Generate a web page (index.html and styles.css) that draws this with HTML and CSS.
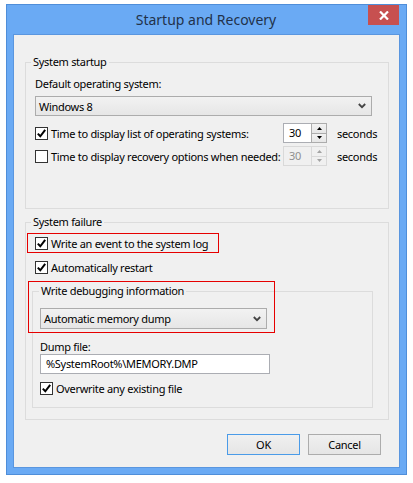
FILE: index.html
```html
<!DOCTYPE html>
<html>
<head>
<meta charset="utf-8">
<link rel="stylesheet" href="styles.css">
</head>
<body>
<div class="window">
  <div class="titlebar">
    <div class="title">Startup and Recovery</div>
    <div class="close">
      <svg width="10" height="9" viewBox="0 0 10 9"><path d="M1 0.5 L9 8.5 M9 0.5 L1 8.5" stroke="#fff" stroke-width="2.2" fill="none"/></svg>
    </div>
  </div>
  <div class="client">
    <fieldset class="group g-startup">
      <legend>System startup</legend>
      <div class="label-line">Default operating system:</div>
      <div class="combo combo-main">
        <span>Windows 8</span>
        <svg class="chev" width="8" height="6" viewBox="0 0 8 6"><path d="M0.8 1 L4 4.2 L7.2 1" stroke="#444" stroke-width="1.8" fill="none"/></svg>
      </div>
      <div class="row timerow row1">
        <div class="check">
          <span class="box"><svg width="11" height="11" viewBox="0 0 11 11"><path d="M1.8 5.6 L4.3 8.3 L9.2 1.8" stroke="#000" stroke-width="2" fill="none"/></svg></span>
          <span>Time to display list of operating systems:</span>
        </div>
        <div class="spin">
          <span class="spin-val">30</span>
          <span class="spin-btns">
            <span><svg width="5" height="3" viewBox="0 0 5 3"><path d="M0 3 L2.5 0 L5 3 Z" fill="#000"/></svg></span>
            <span><svg width="5" height="3" viewBox="0 0 5 3"><path d="M0 0 L5 0 L2.5 3 Z" fill="#000"/></svg></span>
          </span>
        </div>
        <span class="unit">seconds</span>
      </div>
      <div class="row timerow row2">
        <div class="check">
          <span class="box"></span>
          <span>Time to display recovery options when needed:</span>
        </div>
        <div class="spin disabled">
          <span class="spin-val">30</span>
          <span class="spin-btns">
            <span><svg width="5" height="3" viewBox="0 0 5 3"><path d="M0 3 L2.5 0 L5 3 Z" fill="#a3a3a3"/></svg></span>
            <span><svg width="5" height="3" viewBox="0 0 5 3"><path d="M0 0 L5 0 L2.5 3 Z" fill="#a3a3a3"/></svg></span>
          </span>
        </div>
        <span class="unit">seconds</span>
      </div>
    </fieldset>

    <fieldset class="group g-failure">
      <legend>System failure</legend>
      <div class="redbox1">
        <div class="check">
          <span class="box"><svg width="11" height="11" viewBox="0 0 11 11"><path d="M1.8 5.6 L4.3 8.3 L9.2 1.8" stroke="#000" stroke-width="2" fill="none"/></svg></span>
          <span>Write an event to the system log</span>
        </div>
      </div>
      <div class="row row-auto">
        <div class="check">
          <span class="box"><svg width="11" height="11" viewBox="0 0 11 11"><path d="M1.8 5.6 L4.3 8.3 L9.2 1.8" stroke="#000" stroke-width="2" fill="none"/></svg></span>
          <span>Automatically restart</span>
        </div>
      </div>
      <div class="debug-wrap">
        <fieldset class="group g-debug">
          <legend>Write debugging information</legend>
          <div class="combo combo-debug">
            <span>Automatic memory dump</span>
            <svg class="chev" width="8" height="6" viewBox="0 0 8 6"><path d="M0.8 1 L4 4.2 L7.2 1" stroke="#444" stroke-width="1.8" fill="none"/></svg>
          </div>
          <div class="dump-label">Dump file:</div>
          <div class="textfield">%SystemRoot%\MEMORY.DMP</div>
          <div class="row row-over">
            <div class="check">
              <span class="box"><svg width="11" height="11" viewBox="0 0 11 11"><path d="M1.8 5.6 L4.3 8.3 L9.2 1.8" stroke="#000" stroke-width="2" fill="none"/></svg></span>
              <span>Overwrite any existing file</span>
            </div>
          </div>
        </fieldset>
        <div class="redbox2"></div>
      </div>
    </fieldset>

    <div class="buttons">
      <div class="btn default">OK</div>
      <div class="btn">Cancel</div>
    </div>
  </div>
</div>
</body>
</html>
```

FILE: styles.css
```css
* { box-sizing: border-box; }

body {
  margin: 0;
  background: #ffffff;
  font-family: "Noto Sans", "Open Sans", sans-serif;
  font-size: 11px;
  letter-spacing: -0.3px;
  color: #000;
}

.window {
  margin: 4px 0 0 6px;
  width: 401px;
  height: 471px;
  border: 1px solid #4f8ed9;
  background: #6aaaf4;
  padding: 0 6px 6px;
  display: flex;
  flex-direction: column;
}

.titlebar {
  height: 29px;
  display: grid;
  grid-template-columns: 31px 1fr 31px;
  padding-right: 1px;
}

.title {
  grid-column: 2;
  text-align: center;
  font-size: 14px;
  letter-spacing: 0;
  line-height: 29px;
  color: #22324a;
}

.close {
  grid-column: 3;
  height: 20px;
  background: #c75050;
  display: flex;
  align-items: center;
  justify-content: center;
}

.client {
  flex: 1;
  border: 1px solid #5a96df;
  background: #f0f0f0;
  padding: 0 10px 0 11px;
  display: flex;
  flex-direction: column;
}

fieldset.group {
  margin: 0;
  min-width: 0;
  border: 1px solid #dcdcdc;
  padding: 0 9px;
}

legend {
  padding: 0 2px;
  margin-left: -4px;
  line-height: 16px;
}

.g-startup {
  margin-top: 19px !important;
  padding-bottom: 42px !important;
}

.label-line {
  margin-top: 6px;
  line-height: 16px;
}

.combo {
  display: flex;
  align-items: center;
  justify-content: space-between;
  height: 20px;
  border: 1px solid #acacac;
  background: linear-gradient(#f2f2f2, #e6e6e6);
  padding: 0 5px 0 3px;
}

.combo-main {
  margin-top: 4px;
  width: 337px;
}

.row {
  display: flex;
  align-items: center;
  height: 20px;
}

.row1 { margin-top: 7px; }
.row2 { margin-top: 3px; }

.check {
  display: flex;
  align-items: center;
  gap: 3px;
  white-space: nowrap;
}

.timerow .check { width: 248px; }

.box {
  width: 13px;
  height: 13px;
  flex: none;
  border: 1px solid #333;
  background: #fff;
  display: flex;
  align-items: center;
  justify-content: center;
}

.spin {
  display: flex;
  width: 44px;
  height: 20px;
}

.spin-val {
  width: 28px;
  border: 1px solid #abadb3;
  border-right: 0;
  background: #fff;
  padding-left: 5px;
  line-height: 18px;
}

.spin-btns {
  width: 16px;
  display: flex;
  flex-direction: column;
  border: 1px solid #acacac;
}

.spin-btns span {
  flex: 1;
  display: flex;
  align-items: center;
  justify-content: center;
  background: linear-gradient(#f2f2f2, #e6e6e6);
}

.spin-btns span + span { border-top: 1px solid #acacac; }

.spin.disabled .spin-val {
  background: #f0f0f0;
  border-color: #d9d9d9;
  color: #8f8f8f;
}

.spin.disabled .spin-btns { border-color: #d9d9d9; }
.spin.disabled .spin-btns span { background: #f0f0f0; }
.spin.disabled .spin-btns span + span { border-top-color: #d9d9d9; }

.unit { margin-left: 10px; }

.g-failure {
  margin-top: 5px !important;
  padding-bottom: 11px !important;
}

.redbox1 {
  margin: 3px 0 0 -8px;
  width: 192px;
  height: 20px;
  border: 1px solid #e60000;
  padding-left: 7px;
  display: flex;
  align-items: center;
}

.row-auto {
  margin-top: 6px;
  height: 16px;
}

.debug-wrap {
  position: relative;
  margin: 8px 0 0 -3px;
  width: 341px;
}

.g-debug {
  padding: 0 7px 11px !important;
}

.g-debug legend { margin-left: -1px; }

.redbox2 {
  position: absolute;
  left: -4px;
  top: -2px;
  width: 247px;
  height: 52px;
  border: 1px solid #e60000;
}

.combo-debug {
  margin-top: 9px;
  width: 227px;
  height: 21px;
}

.dump-label {
  margin-top: 11px;
  line-height: 14px;
}

.textfield {
  width: 230px;
  height: 20px;
  border: 1px solid #abadb3;
  background: #fff;
  padding-left: 5px;
  line-height: 18px;
}

.row-over {
  margin-top: 6px;
  height: 16px;
}

.buttons {
  display: flex;
  justify-content: flex-end;
  gap: 8px;
  margin-top: 14px;
  padding-right: 8px;
}

.btn {
  width: 73px;
  height: 21px;
  border: 1px solid #acacac;
  background: linear-gradient(#f0f0f0, #e5e5e5);
  display: flex;
  align-items: center;
  justify-content: center;
}

.btn.default { border-color: #4a9be8; }
```
